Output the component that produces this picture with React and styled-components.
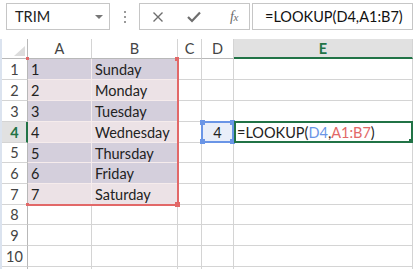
import React from "react";
import styled, { createGlobalStyle, css } from "styled-components";

const GlobalStyle = createGlobalStyle`
  html, body { margin: 0; padding: 0; background: #fff; }
  body { font-family: Lato, "Open Sans", sans-serif; color: #222; }
  * { box-sizing: border-box; }
`;

const GRID = "#d4d4d4";
const HEAD_LINE = "#b8b8b8";
const GREEN = "#217346";
const RED = "#e26868";
const BLUE = "#6a95e6";

const place = css`
  grid-row: ${(p) => p.$row};
  grid-column: ${(p) => p.$col};
`;

const Page = styled.div`
  width: 415px;
  height: 269px;
  overflow: hidden;
  background: #fff;
`;

const FormulaBar = styled.div`
  display: flex;
  align-items: flex-start;
  height: 39px;
  padding: 3px 2px 0 6px;
`;

const Box = styled.div`
  height: 27px;
  border: 1px solid #c6c6c6;
  background: #fff;
  display: flex;
  align-items: center;
`;

const NameBox = styled(Box)`
  width: 104px;
  padding: 0 6px 0 8px;
  justify-content: space-between;
  font-size: 14.5px;
  color: #222;
`;

const Caret = styled.span`
  width: 0;
  height: 0;
  border-left: 4px solid transparent;
  border-right: 4px solid transparent;
  border-top: 4px solid #777;
  margin-top: 1px;
`;

const Grip = styled.div`
  width: 29px;
  height: 27px;
  display: flex;
  flex-direction: column;
  align-items: center;
  justify-content: center;
  gap: 3px;
  & > i {
    width: 2px;
    height: 2px;
    background: #9a9a9a;
    display: block;
  }
`;

const ButtonGroup = styled(Box)`
  width: 111px;
  padding-left: 12px;
`;

const IconButton = styled.span`
  width: 35px;
  display: flex;
  align-items: center;
  color: #707070;
`;

const Fx = styled.span`
  font-family: "Liberation Serif", serif;
  font-style: italic;
  font-size: 14px;
  color: #6a6a6a;
  letter-spacing: -0.5px;
  padding-left: 8px;
  & small { font-size: 11px; }
`;

const FormulaInput = styled(Box)`
  flex: 1;
  margin-left: 2px;
  padding-left: 12px;
  font-size: 14.5px;
  color: #111;
`;

const Sheet = styled.div`
  display: grid;
  grid-template-columns: 26px 64px 86px 24px 32px 179px;
  grid-template-rows: 20px 21px 21px 21px 21px 20px 21px 21px 20px 21px 21px 21px;
  border-left: 2px solid #dbe3ef;
  width: 413px;
`;

const Corner = styled.div`
  ${place};
  border-right: 1px solid ${HEAD_LINE};
  border-bottom: 1px solid ${HEAD_LINE};
  position: relative;
  &::after {
    content: "";
    position: absolute;
    right: 2px;
    bottom: 2px;
    width: 0;
    height: 0;
    border-left: 11px solid transparent;
    border-bottom: 10px solid #dcdcdc;
  }
`;

const ColHeader = styled.div`
  ${place};
  display: flex;
  align-items: center;
  justify-content: center;
  font-size: 14.5px;
  color: ${(p) => (p.$active ? GREEN : "#444")};
  font-weight: ${(p) => (p.$active ? 700 : 400)};
  background: ${(p) => (p.$active ? "#e1e1e1" : "#fff")};
  border-right: 1px solid ${GRID};
  border-bottom: ${(p) => (p.$active ? `2px solid ${GREEN}` : `1px solid ${HEAD_LINE}`)};
  padding-top: ${(p) => (p.$active ? "1px" : "0")};
`;

const RowHeader = styled.div`
  ${place};
  display: flex;
  align-items: center;
  justify-content: center;
  font-size: 14.5px;
  color: ${(p) => (p.$active ? GREEN : "#444")};
  font-weight: ${(p) => (p.$active ? 700 : 400)};
  background: ${(p) => (p.$active ? "#e1e1e1" : "#fff")};
  border-right: ${(p) => (p.$active ? `2px solid ${GREEN}` : `1px solid ${HEAD_LINE}`)};
  border-bottom: 1px solid ${GRID};
  padding-left: ${(p) => (p.$active ? "1px" : "0")};
`;

const TONES = {
  dark: { bg: "#d4cfdc", line: "#f6ecec" },
  light: { bg: "#ece2e6", line: "#f6ecec" },
};

const Cell = styled.div`
  ${place};
  display: flex;
  align-items: center;
  justify-content: ${(p) => (p.$align === "center" ? "center" : "flex-start")};
  padding: 1px 3px 0;
  font-size: 14.5px;
  color: #222;
  white-space: nowrap;
  background: ${(p) => (p.$tone ? TONES[p.$tone].bg : "#fff")};
  border-right: 1px solid ${(p) => (p.$tone ? TONES[p.$tone].line : GRID)};
  border-bottom: 1px solid ${(p) => (p.$tone ? TONES[p.$tone].line : GRID)};
`;

const RefCell = styled(Cell)`
  position: relative;
  z-index: 2;
  background: #e9eef9;
  border: 2px solid ${BLUE};
  margin: -1px 0 0 -1px;
  padding-top: 1px;
`;

const EditCell = styled(Cell)`
  position: relative;
  z-index: 2;
  border: 2px solid ${GREEN};
  margin: -1px 0 0 0;
  padding: 1px 0 0 1px;
`;

const Handle = styled.span`
  position: absolute;
  width: ${(p) => p.$size || 5}px;
  height: ${(p) => p.$size || 5}px;
  background: ${(p) => p.$color};
  ${(p) => (p.$top ? "top" : "bottom")}: -${(p) => Math.ceil((p.$size || 5) / 2)}px;
  ${(p) => (p.$left ? "left" : "right")}: -${(p) => Math.ceil((p.$size || 5) / 2)}px;
`;

const RangeOutline = styled.div`
  grid-column: 2 / 4;
  grid-row: 2 / 9;
  position: relative;
  z-index: 1;
  pointer-events: none;
  border-right: 2px solid ${RED};
  border-bottom: 2px solid ${RED};
  margin: 0 -1px -1px 0;
`;

const Ref = styled.span`
  color: ${(p) => p.$color};
`;

const days = ["Sunday", "Monday", "Tuesday", "Wednesday", "Thursday", "Friday", "Saturday"];
const tones = ["dark", "light", "dark", "light", "dark", "dark", "light"];
const cols = ["A", "B", "C", "D", "E"];

export default function App() {
  const rows = [];
  for (let r = 1; r <= 11; r++) {
    const row = r + 1;
    const inRange = r <= 7;
    const tone = inRange ? tones[r - 1] : undefined;
    rows.push(
      <React.Fragment key={r}>
        <RowHeader $row={row} $col={1} $active={r === 4}>{r <= 10 ? r : ""}</RowHeader>
        <Cell $row={row} $col={2} $tone={tone}>{inRange ? r : ""}</Cell>
        <Cell $row={row} $col={3} $tone={tone}>{inRange ? days[r - 1] : ""}</Cell>
        <Cell $row={row} $col={4} />
        {r === 4 ? (
          <RefCell $row={row} $col={5} $align="center">
            4
            <Handle $color={BLUE} $top $left />
            <Handle $color={BLUE} $top />
            <Handle $color={BLUE} $left />
            <Handle $color={BLUE} />
          </RefCell>
        ) : (
          <Cell $row={row} $col={5} />
        )}
        {r === 4 ? (
          <EditCell $row={row} $col={6}>
            =LOOKUP(<Ref $color={BLUE}>D4</Ref>,<Ref $color={RED}>A1:B7</Ref>)
            <Handle $color={GREEN} $size={4} />
          </EditCell>
        ) : (
          <Cell $row={row} $col={6} />
        )}
      </React.Fragment>
    );
  }

  return (
    <Page>
      <GlobalStyle />
      <FormulaBar>
        <NameBox>
          <span>TRIM</span>
          <Caret />
        </NameBox>
        <Grip>
          <i />
          <i />
          <i />
        </Grip>
        <ButtonGroup>
          <IconButton>
            <svg width="12" height="12" viewBox="0 0 12 12">
              <path d="M1.5 1.5 L10.5 10.5 M10.5 1.5 L1.5 10.5" stroke="#6e6e6e" strokeWidth="1.4" fill="none" />
            </svg>
          </IconButton>
          <IconButton>
            <svg width="14" height="12" viewBox="0 0 14 12">
              <path d="M1 6 L5 10 L13 1.5" stroke="#6e6e6e" strokeWidth="2.2" fill="none" />
            </svg>
          </IconButton>
          <Fx>
            f<small>x</small>
          </Fx>
        </ButtonGroup>
        <FormulaInput>=LOOKUP(D4,A1:B7)</FormulaInput>
      </FormulaBar>
      <Sheet>
        <Corner $row={1} $col={1} />
        {cols.map((c, i) => (
          <ColHeader key={c} $row={1} $col={i + 2} $active={c === "E"}>
            {c}
          </ColHeader>
        ))}
        {rows}
        <RangeOutline>
          <Handle $color={RED} $size={3} $top $left />
          <Handle $color={RED} $size={4} $top />
          <Handle $color={RED} $size={3} $left />
          <Handle $color={RED} $size={5} />
        </RangeOutline>
      </Sheet>
    </Page>
  );
}
